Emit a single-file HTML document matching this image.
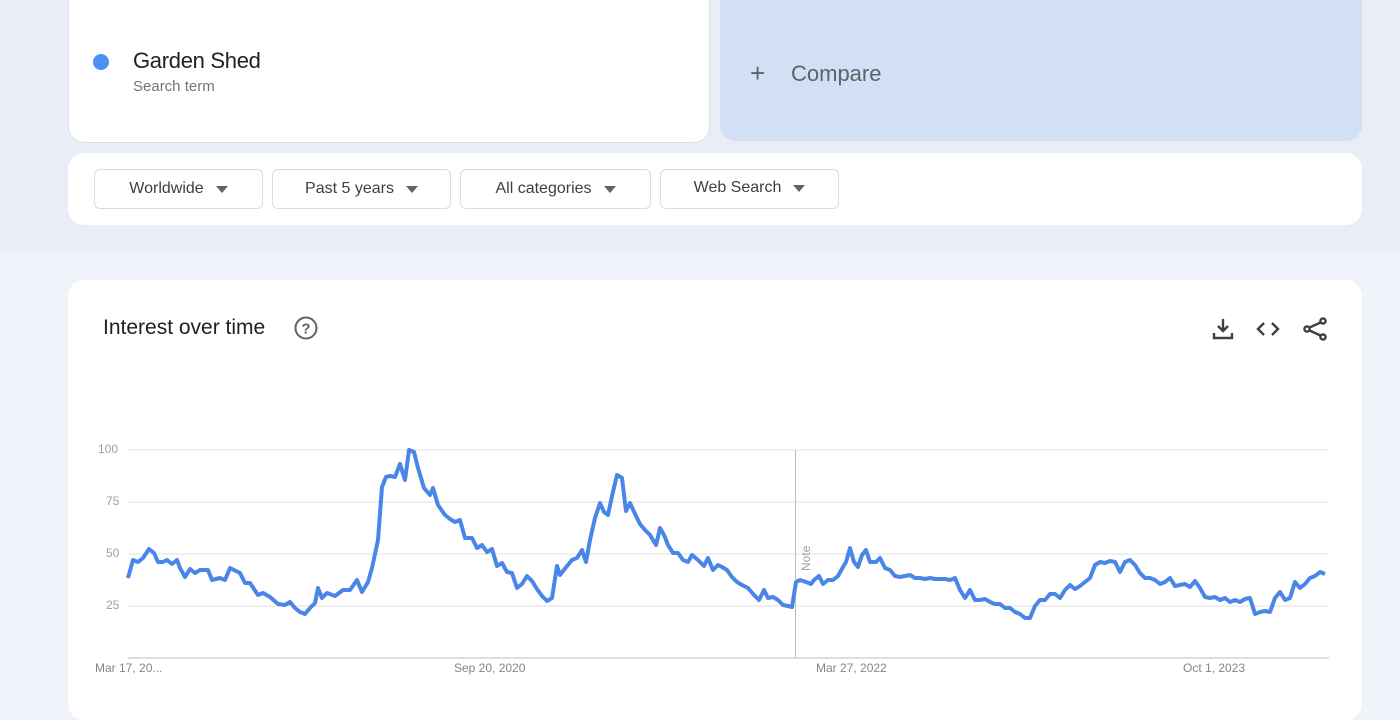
<!DOCTYPE html>
<html><head><meta charset="utf-8"><style>
body{margin:0;width:1400px;height:690px;overflow:hidden;font-family:"Liberation Sans",sans-serif;background:#f0f3f9;position:relative}
.top{position:absolute;left:0;top:0;width:1400px;height:252px;background:#e8edf6}
.card{position:absolute;background:#fff;border-radius:16px}
.dd{position:absolute;top:169px;height:40px;border:1px solid #dadce0;border-radius:6px;background:#fff;font-size:16px;color:#3c4043;display:flex;align-items:center;justify-content:center;box-sizing:border-box}
.dd span.t{display:inline-block;width:0;height:0;border-left:6px solid transparent;border-right:6px solid transparent;border-top:7px solid #5f6368;margin-left:12px}
.yl{position:absolute;left:98px;font-size:12px;color:#9aa0a6}
.xl{position:absolute;top:661px;font-size:12px;color:#80868b}
</style></head><body>
<div class="top"></div>
<div class="card" style="left:68px;top:-16px;width:642px;height:159px;border:1px solid #dde1e6;box-sizing:border-box"></div>
<div style="position:absolute;left:93px;top:54px;width:16px;height:16px;border-radius:50%;background:#4f8ef5"></div>
<div style="position:absolute;left:133px;top:48px;font-size:22px;color:#202124;letter-spacing:-0.3px">Garden Shed</div>
<div style="position:absolute;left:133px;top:78px;font-size:15px;color:#70757a">Search term</div>
<div style="position:absolute;left:720px;top:-16px;width:642px;height:157px;background:#d2e0f5;border-radius:16px"></div>
<div style="position:absolute;left:750px;top:58px;font-size:26px;color:#5f6368">+</div>
<div style="position:absolute;left:791px;top:61px;font-size:22px;color:#5f6368">Compare</div>
<div class="card" style="left:68px;top:153px;width:1294px;height:72px"></div>
<div class="dd" style="left:94px;width:169px">Worldwide<span class="t"></span></div>
<div class="dd" style="left:272px;width:179px">Past 5 years<span class="t"></span></div>
<div class="dd" style="left:460px;width:191px">All categories<span class="t"></span></div>
<div class="dd" style="left:660px;width:179px;padding-bottom:2px">Web Search<span class="t"></span></div>
<div class="card" style="left:68px;top:280px;width:1294px;height:440px"></div>
<div style="position:absolute;left:103px;top:316px;font-size:21px;color:#202124">Interest over time</div>
<svg style="position:absolute;left:293px;top:315px" width="26" height="26" viewBox="0 0 26 26"><circle cx="13" cy="13" r="10.5" fill="none" stroke="#5f6368" stroke-width="2"/><text x="13" y="18.5" font-size="15" font-weight="bold" text-anchor="middle" fill="#5f6368" font-family="Liberation Sans">?</text></svg>
<svg style="position:absolute;left:1210px;top:316px" width="120" height="26" viewBox="0 0 120 26" fill="none" stroke="#3c4043" stroke-width="2.4">
<path d="M13 3v12M8 10l5 5 5-5M4 17v5h18v-5"/>
<path d="M54 7l-6 6 6 6M62 7l6 6-6 6"/>
<circle cx="113" cy="5" r="2.6"/><circle cx="97" cy="13" r="2.6"/><circle cx="113" cy="21" r="2.6"/><path d="M99.5 11.5l11-5M99.5 14.5l11 5"/>
</svg>
<svg style="position:absolute;left:0;top:0" width="1400" height="690">
<g stroke="#e0e0e0" stroke-width="1"><line x1="128" y1="450" x2="1329" y2="450"/><line x1="128" y1="502" x2="1329" y2="502"/><line x1="128" y1="554" x2="1329" y2="554"/><line x1="128" y1="606" x2="1329" y2="606"/></g>
<line x1="128" y1="658" x2="1329" y2="658" stroke="#bdbdbd"/>
<line x1="795.5" y1="450" x2="795.5" y2="658" stroke="#bdbdbd"/>
<text transform="translate(810,571) rotate(-90)" font-size="12" fill="#9aa0a6" font-family="Liberation Sans">Note</text>
<polyline fill="none" stroke="#4a86e8" stroke-width="4" stroke-linejoin="round" points="128,578 133,560 138,562 143,558 149,549 154,553 158,562 163,562 167,560 172,564 177,560 180,568 185,577 190,569 195,573 200,570 208,570 212,580 220,578 225,580 230,568 240,573 245,583 250,583 258,595 263,593 270,597 278,604 285,605 290,602 295,608 300,612 305,614 310,608 315,603 318,588 322,598 327,593 335,596 343,590 350,590 357,580 362,592 368,582 372,568 378,540 382,487 386,477 390,476 395,477 400,464 405,480 409,450 414,452 418,468 424,488 430,495 433,488 438,505 445,515 450,519 455,522 460,520 465,538 472,538 477,548 482,545 487,552 492,549 497,566 502,563 507,572 512,573 517,588 522,584 527,576 532,581 537,589 542,596 547,601 552,598 557,566 560,575 567,566 572,560 577,558 582,550 586,562 590,540 595,518 600,503 604,512 608,515 612,496 617,475 622,478 626,511 630,503 636,516 640,524 645,530 650,535 656,545 660,528 664,535 668,545 673,553 678,553 683,560 688,562 692,555 698,560 704,566 708,558 713,570 718,565 722,567 727,570 732,577 737,582 742,585 748,588 754,595 759,600 764,590 768,598 773,597 778,600 783,605 788,606 792,607 796,582 800,580 806,582 811,584 814,580 819,576 823,584 828,580 833,580 838,576 843,567 846,562 850,548 854,562 858,567 862,555 866,550 870,562 876,562 880,558 885,568 890,570 895,576 900,577 905,576 910,575 915,578 920,578 925,579 930,578 935,579 940,579 945,579 950,580 955,578 960,590 965,598 970,590 975,600 980,600 985,599 990,602 995,604 1000,604 1005,608 1010,608 1015,612 1020,614 1025,618 1030,618 1035,606 1040,600 1045,600 1050,594 1055,594 1060,598 1065,590 1070,585 1075,589 1080,586 1085,582 1090,578 1095,565 1100,562 1105,563 1110,561 1115,562 1120,572 1125,562 1130,560 1135,565 1140,573 1145,578 1150,578 1155,580 1160,584 1165,582 1170,578 1175,586 1180,585 1185,584 1190,587 1195,581 1200,588 1205,597 1210,598 1215,597 1220,600 1225,598 1230,602 1235,600 1240,602 1245,599 1250,598 1255,614 1260,612 1265,611 1270,612 1275,598 1280,592 1285,600 1290,598 1295,582 1300,588 1305,584 1310,578 1315,576 1320,572 1325,574"/>
</svg>
<div class="yl" style="top:442px">100</div>
<div class="yl" style="top:494px;left:106px">75</div>
<div class="yl" style="top:546px;left:106px">50</div>
<div class="yl" style="top:598px;left:106px">25</div>
<div class="xl" style="left:95px">Mar 17, 20...</div>
<div class="xl" style="left:454px">Sep 20, 2020</div>
<div class="xl" style="left:816px">Mar 27, 2022</div>
<div class="xl" style="left:1183px">Oct 1, 2023</div>
</body></html>
